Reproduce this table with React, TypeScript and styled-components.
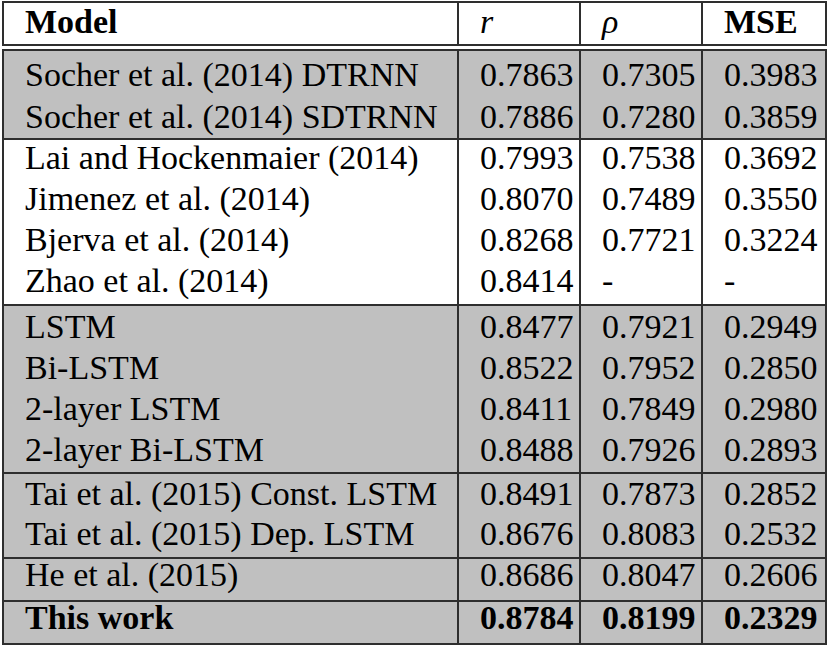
import React from "react";
import styled, { createGlobalStyle } from "styled-components";

const GlobalStyle = createGlobalStyle`
  html, body {
    margin: 0;
    padding: 0;
    background: #ffffff;
  }
  body {
    font-family: "Liberation Serif", "Times New Roman", serif;
    color: #000;
  }
`;

const LINE = "2px solid #2e2e2e";

const Page = styled.div`
  padding: 1px 0 0 2px;
  width: 829px;
  height: 648px;
  box-sizing: border-box;
`;

const Table = styled.div`
  width: 825px;
  display: flex;
  flex-direction: column;
  gap: 3px;
`;

const Box = styled.div`
  border: ${LINE};
`;

const Section = styled.div<{ $grey?: boolean }>`
  background: ${(p) => (p.$grey ? "#c0c0c0" : "#ffffff")};
  display: grid;
  grid-template-columns: 453px 122px 122px 124px;

  & + & {
    border-top: ${LINE};
  }
`;

const Column = styled.div<{ $first?: boolean; $pt?: number; $pb?: number }>`
  display: flex;
  flex-direction: column;
  padding-top: ${(p) => p.$pt || 0}px;
  padding-bottom: ${(p) => p.$pb || 0}px;
  border-left: ${(p) => (p.$first ? "none" : LINE)};
`;

const Line = styled.div<{ $h: number; $lh?: number; $bold?: boolean }>`
  font-size: 34px;
  height: ${(p) => p.$h}px;
  line-height: ${(p) => p.$lh || p.$h}px;
  font-weight: ${(p) => (p.$bold ? 700 : 400)};
  padding-left: 21px;
  white-space: nowrap;
`;

const Italic = styled.span`
  font-style: italic;
`;

type Group = {
  grey: boolean;
  rh: number;
  lh?: number;
  pt?: number;
  pb?: number;
  bold?: boolean;
  rows: string[][];
};

const groups: Group[] = [
  {
    grey: true,
    rh: 42,
    pt: 3,
    pb: 0,
    rows: [
      ["Socher et al. (2014) DTRNN", "0.7863", "0.7305", "0.3983"],
      ["Socher et al. (2014) SDTRNN", "0.7886", "0.7280", "0.3859"],
    ],
  },
  {
    grey: false,
    rh: 41,
    lh: 35,
    pb: 0,
    rows: [
      ["Lai and Hockenmaier (2014)", "0.7993", "0.7538", "0.3692"],
      ["Jimenez et al. (2014)", "0.8070", "0.7489", "0.3550"],
      ["Bjerva et al. (2014)", "0.8268", "0.7721", "0.3224"],
      ["Zhao et al. (2014)", "0.8414", "-", "-"],
    ],
  },
  {
    grey: true,
    rh: 41,
    pb: 2,
    rows: [
      ["LSTM", "0.8477", "0.7921", "0.2949"],
      ["Bi-LSTM", "0.8522", "0.7952", "0.2850"],
      ["2-layer LSTM", "0.8411", "0.7849", "0.2980"],
      ["2-layer Bi-LSTM", "0.8488", "0.7926", "0.2893"],
    ],
  },
  {
    grey: true,
    rh: 40,
    pb: 3,
    rows: [
      ["Tai et al. (2015) Const. LSTM", "0.8491", "0.7873", "0.2852"],
      ["Tai et al. (2015) Dep. LSTM", "0.8676", "0.8083", "0.2532"],
    ],
  },
  {
    grey: true,
    rh: 32,
    pb: 9,
    rows: [["He et al. (2015)", "0.8686", "0.8047", "0.2606"]],
  },
  {
    grey: true,
    rh: 32,
    pb: 9,
    bold: true,
    rows: [["This work", "0.8784", "0.8199", "0.2329"]],
  },
];

const App = () => {
  const header: React.ReactNode[] = [
    <b key="m">Model</b>,
    <Italic key="r">r</Italic>,
    <Italic key="p">ρ</Italic>,
    <b key="s">MSE</b>,
  ];
  return (
    <>
      <GlobalStyle />
      <Page>
        <Table>
          <Box>
            <Section>
              {header.map((h, i) => (
                <Column key={i} $first={i === 0} $pt={1} $pb={4}>
                  <Line $h={36}>{h}</Line>
                </Column>
              ))}
            </Section>
          </Box>
          <Box>
            {groups.map((g, gi) => (
              <Section key={gi} $grey={g.grey}>
                {[0, 1, 2, 3].map((ci) => (
                  <Column key={ci} $first={ci === 0} $pt={g.pt} $pb={g.pb}>
                    {g.rows.map((r, ri) => (
                      <Line key={ri} $h={g.rh} $lh={g.lh} $bold={g.bold}>
                        {r[ci]}
                      </Line>
                    ))}
                  </Column>
                ))}
              </Section>
            ))}
          </Box>
        </Table>
      </Page>
    </>
  );
};

export default App;
